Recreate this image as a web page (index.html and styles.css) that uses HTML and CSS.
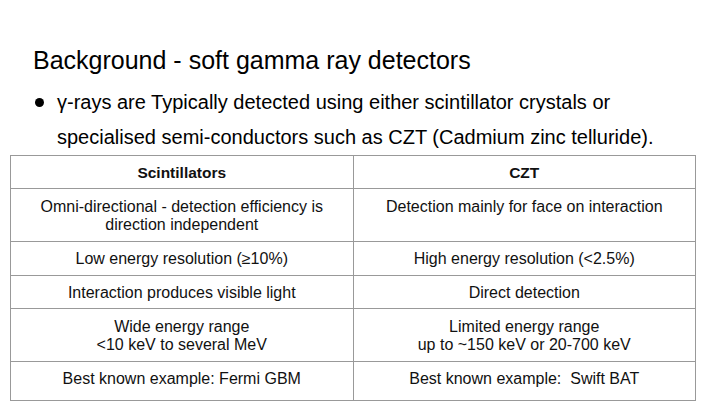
FILE: index.html
```html
<!DOCTYPE html>
<html>
<head>
<meta charset="utf-8">
<link rel="stylesheet" href="styles.css">
</head>
<body>
<div class="slide">
  <h1 class="title">Background - soft gamma ray detectors</h1>
  <ul class="bullets">
    <li>γ-rays are Typically detected using either scintillator crystals or specialised semi-conductors such as CZT (Cadmium zinc telluride).</li>
  </ul>
  <table class="cmp">
    <tr class="r-head"><th>Scintillators</th><th>CZT</th></tr>
    <tr class="r-tall"><td>Omni-directional - detection efficiency is<br>direction independent</td><td>Detection mainly for face on interaction</td></tr>
    <tr class="r-one"><td>Low energy resolution (≥10%)</td><td>High energy resolution (&lt;2.5%)</td></tr>
    <tr class="r-one2"><td>Interaction produces visible light</td><td>Direct detection</td></tr>
    <tr class="r-tall"><td>Wide energy range<br>&lt;10 keV to several MeV</td><td>Limited energy range<br>up to ~150 keV or 20-700 keV</td></tr>
    <tr class="r-last"><td>Best known example: Fermi GBM</td><td>Best known example:&nbsp; Swift BAT</td></tr>
  </table>
</div>
</body>
</html>
```
FILE: styles.css
```css
html, body {
  margin: 0;
  padding: 0;
  background: #ffffff;
}
.slide {
  width: 720px;
  height: 405px;
  overflow: hidden;
  font-family: "Liberation Sans", Arial, sans-serif;
  color: #000;
}
.title {
  margin: 0;
  padding: 45px 0 0 33px;
  font-size: 25px;
  font-weight: normal;
  line-height: 30px;
}
.bullets {
  margin: 0;
  padding: 10px 0 0 57px;
  list-style: none;
  width: 610px;
}
.bullets li {
  position: relative;
  font-size: 20px;
  line-height: 35px;
}
.bullets li::before {
  content: "";
  position: absolute;
  left: -22px;
  top: 13px;
  width: 9px;
  height: 9px;
  border-radius: 50%;
  background: #000;
}
.cmp {
  margin: 0 0 0 10px;
  border-collapse: collapse;
  width: 686px;
  table-layout: fixed;
}
.cmp th, .cmp td {
  border: 1px solid #999;
  text-align: center;
  vertical-align: top;
  font-size: 16px;
  line-height: 18px;
  padding: 8px 4px 0;
  color: #111;
}
.cmp th {
  font-weight: bold;
  font-size: 15.5px;
}
.r-head { height: 33px; }
.r-tall { height: 53px; }
.r-one { height: 34px; }
.r-one2 { height: 33px; }
.r-last { height: 39px; }
.r-tall td { padding-top: 9px; }
```
